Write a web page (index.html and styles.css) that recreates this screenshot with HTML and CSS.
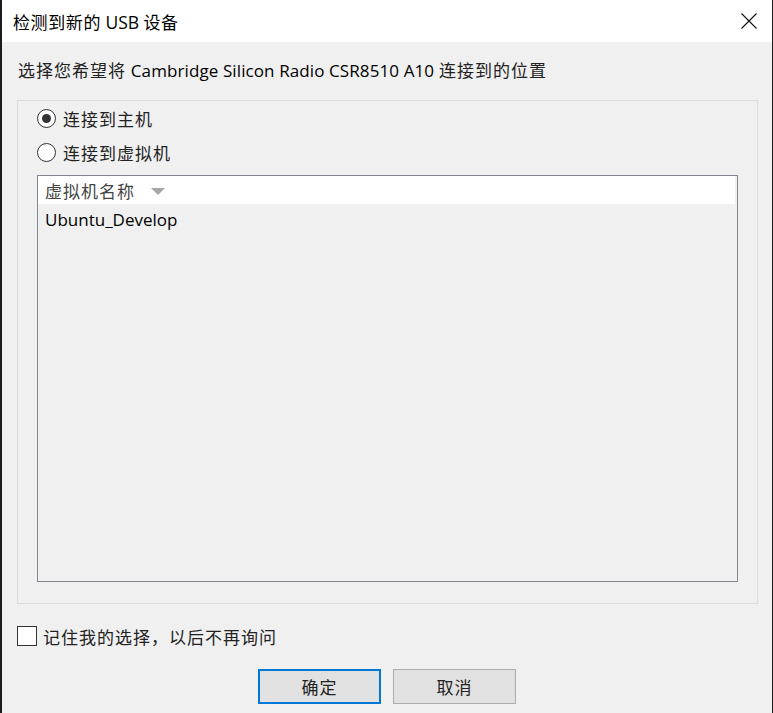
FILE: index.html
```html
<!DOCTYPE html>
<html lang="zh-CN">
<head>
  <meta charset="UTF-8" />
  <title>检测到新的 USB 设备</title>
  <link rel="stylesheet" href="styles.css">
</head>
<body>
  <div class="window">
    <div class="titlebar">
      <span class="title">检测到新的 <span class="latin">USB</span> 设备</span>
      <svg class="close" width="16" height="16" viewBox="0 0 16 16">
        <path d="M0.5 0.5 L15.5 15.5 M15.5 0.5 L0.5 15.5" stroke="#111" stroke-width="1.1" fill="none"/>
      </svg>
    </div>

    <p class="prompt">选择您希望将 <span class="dev">Cambridge Silicon Radio CSR8510 A10</span> 连接到的位置</p>

    <div class="group">
      <label class="radio-row"><span class="radio checked"></span>连接到主机</label>
      <label class="radio-row"><span class="radio"></span>连接到虚拟机</label>

      <div class="listbox">
        <div class="list-header">
          <span>虚拟机名称</span>
          <svg class="sort" width="14" height="7" viewBox="0 0 14 7"><path d="M0 0 H14 L7 7 Z" fill="#a6a6a6"/></svg>
        </div>
        <div class="list-item">Ubuntu_Develop</div>
      </div>
    </div>

    <label class="check-row"><span class="checkbox"></span>记住我的选择，以后不再询问</label>

    <div class="buttons">
      <button class="btn default">确定</button>
      <button class="btn">取消</button>
    </div>
  </div>
</body>
</html>
```

FILE: styles.css
```css
body {
  margin: 0;
  background: #1c1c1c;
  font-family: "Noto Sans CJK SC", "Noto Sans", sans-serif;
  color: #000;
}
.window {
  margin: 0 1px 0 2px;
  height: 713px;
  background: #f0f0f0;
  overflow: hidden;
}
.titlebar {
  height: 42px;
  background: #fff;
  display: flex;
  align-items: center;
  justify-content: space-between;
  padding: 0 15px 0 11px;
}
.title {
  font-size: 17px;
  letter-spacing: 0.6px;
  color: #000;
}
.latin {
  font-family: "Open Sans", sans-serif;
  font-size: 17.5px;
  letter-spacing: 0;
}
.close {
  display: block;
}
.prompt {
  margin: 16px 0 0 16px;
  font-size: 17px;
  line-height: 24px;
  letter-spacing: 1px;
  color: #222;
}
.dev {
  font-family: "Open Sans", "Noto Sans", sans-serif;
  letter-spacing: 0.1px;
  color: #000;
}
.group {
  margin: 17px 0 0 15px;
  width: 739px;
  height: 497px;
  border: 1px solid #dcdcdc;
  padding: 5px 0 0 0;
  display: flex;
  flex-direction: column;
  gap: 10px;
}
.radio-row {
  display: flex;
  align-items: center;
  height: 24px;
  margin-left: 19px;
  font-size: 17px;
  letter-spacing: 1px;
  color: #222;
  gap: 7px;
}
.radio {
  width: 17px;
  height: 17px;
  border: 1px solid #333;
  border-radius: 50%;
  background: #fff;
  display: flex;
  align-items: center;
  justify-content: center;
}
.radio.checked::after {
  content: "";
  width: 9px;
  height: 9px;
  border-radius: 50%;
  background: #333;
}
.listbox {
  margin: 1px 0 0 19px;
  width: 699px;
  height: 405px;
  border: 1px solid #828790;
  background: #f0f0f0;
}
.list-header {
  width: 690px;
  height: 28px;
  background: #fff;
  display: flex;
  align-items: center;
  padding-left: 7px;
  gap: 16px;
  font-size: 17px;
  letter-spacing: 1px;
  color: #444;
}
.sort {
  display: block;
  margin-top: 2px;
}
.list-item {
  height: 28px;
  line-height: 28px;
  margin-top: 2px;
  padding-left: 7px;
  font-family: "Open Sans", "Noto Sans", sans-serif;
  font-size: 17px;
  color: #000;
}
.check-row {
  display: flex;
  align-items: center;
  height: 24px;
  margin: 20px 0 0 15px;
  font-size: 17px;
  letter-spacing: 1px;
  color: #222;
  gap: 6px;
}
.checkbox {
  width: 18px;
  height: 18px;
  border: 1px solid #333;
  background: #fff;
}
.buttons {
  display: flex;
  justify-content: center;
  gap: 12px;
  margin-top: 21px;
}
.btn {
  width: 123px;
  height: 35px;
  background: #e1e1e1;
  border: 1px solid #adadad;
  font-family: "Noto Sans CJK SC", sans-serif;
  font-size: 17px;
  letter-spacing: 1px;
  color: #222;
  padding: 0;
}
.btn.default {
  border: 2px solid #0078d7;
}
```
